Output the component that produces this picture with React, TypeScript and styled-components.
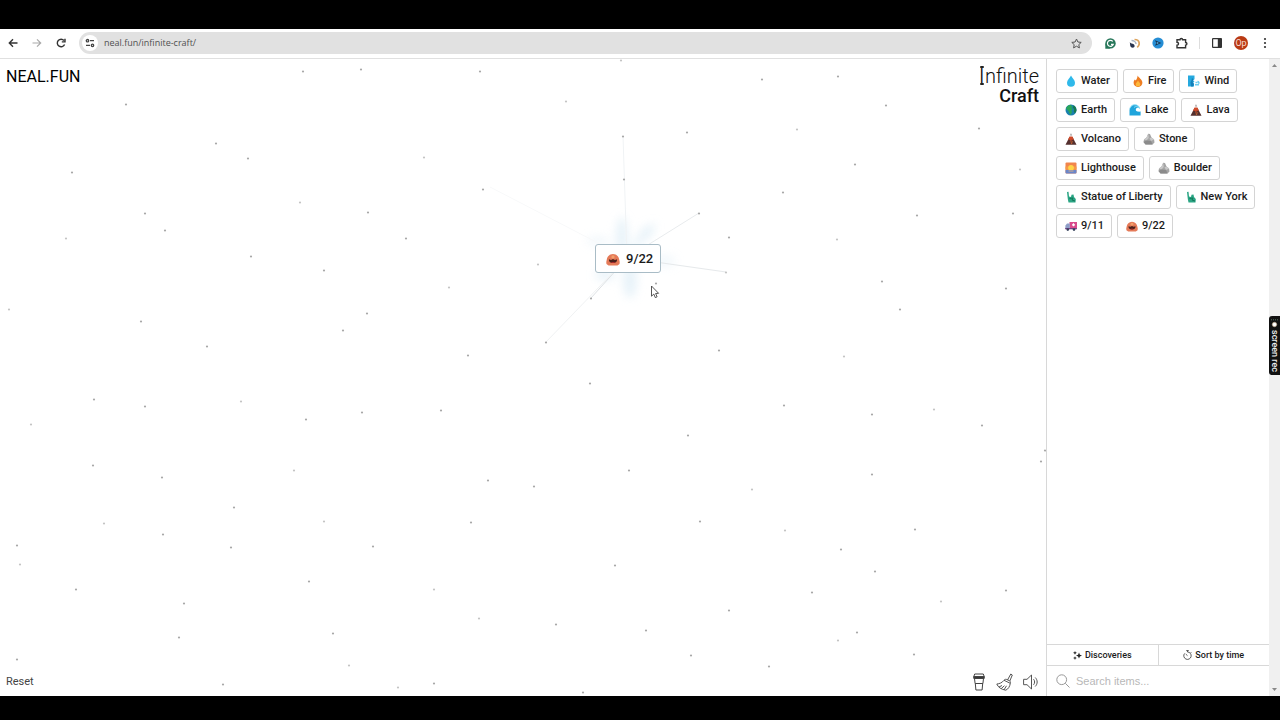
import React from "react";
import styled, { createGlobalStyle } from "styled-components";

const GlobalStyle = createGlobalStyle`
  * { box-sizing: border-box; }
  body { margin: 0; background: #000; font-family: Roboto, "Liberation Sans", sans-serif; color: #1b1b1b; }
  button { font-family: inherit; color: inherit; margin: 0; padding: 0; border: 0; background: none; cursor: pointer; }
  svg { display: block; flex: none; }
`;

const Screen = styled.div`
  height: 100vh;
  padding: 29px 0 24px;
  display: flex;
  flex-direction: column;
  background: #000;
`;

const Toolbar = styled.header`
  flex: none;
  height: 30px;
  display: flex;
  align-items: center;
  background: #fff;
  border-bottom: 1px solid #e0e0e0;
  padding: 0 3px 1px 7px;
`;

const ToolButton = styled.button<{ $width?: number }>`
  width: ${(p) => p.$width ?? 24}px;
  height: 22px;
  flex: none;
  display: flex;
  align-items: center;
  justify-content: center;
`;

const Omnibox = styled.div`
  flex: 1;
  min-width: 0;
  height: 22px;
  margin: 0 6px 0 12px;
  padding: 0 4px 0 3px;
  display: flex;
  align-items: center;
  gap: 6px;
  border-radius: 11px;
  background: #e1e1e1;
`;

const SiteInfo = styled.button`
  width: 16px;
  height: 16px;
  border-radius: 50%;
  background: #fff;
  display: flex;
  align-items: center;
  justify-content: center;
`;

const Address = styled.input`
  flex: 1;
  min-width: 0;
  border: 0;
  outline: 0;
  padding: 0;
  background: none;
  font: 9px/16px "Open Sans", sans-serif;
  color: #505050;
`;

const Divider = styled.span`
  width: 1px;
  height: 12px;
  margin: 0 5px;
  background: #ddd;
`;

const Avatar = styled.span`
  width: 14px;
  height: 14px;
  border-radius: 50%;
  background: #b93a14;
  color: #f8ddd2;
  font-size: 9px;
  line-height: 14px;
  text-align: center;
`;

const Page = styled.div`
  flex: 1;
  min-height: 0;
  display: flex;
  background: #fff;
`;

const Workspace = styled.main`
  flex: 1;
  min-width: 0;
  position: relative;
  overflow: hidden;
  display: flex;
  flex-direction: column;
  justify-content: space-between;
`;

const Sky = styled.svg`
  position: absolute;
  left: 0;
  top: 0;
`;

const WorkspaceRow = styled.div`
  position: relative;
  display: flex;
  justify-content: space-between;
  padding: 6px 7px 3px 6px;
`;

const SiteLogo = styled.a`
  font: 16px/24px Roboto, sans-serif;
  color: #000;
  text-decoration: none;
`;

const GameLogo = styled.h1`
  margin: 0;
  text-align: right;
  color: #111;
  font-size: 18px;
  line-height: 22px;
  font-weight: 500;
`;

const LogoTop = styled.span`
  display: flex;
  justify-content: flex-end;
  height: 20px;
  font-size: 20px;
  line-height: 22px;
  font-weight: 300;
`;

const LogoInitial = styled.span`
  position: relative;
  font-size: 24px;
  line-height: 22px;
  &::before,
  &::after {
    content: "";
    position: absolute;
    left: 1px;
    width: 4px;
    height: 2px;
    border-radius: 1px;
    background: #222;
  }
  &::before { top: 1px; }
  &::after { bottom: 0; }
`;

const ResetButton = styled.button`
  font-size: 11px;
  line-height: 22px;
  color: #444;
`;

const Tools = styled.div`
  display: flex;
  gap: 10px;
  align-items: center;
`;

const ItemButton = styled.button<{ $active?: boolean }>`
  height: ${(p) => (p.$active ? 29 : 24)}px;
  display: flex;
  align-items: center;
  gap: ${(p) => (p.$active ? 6 : 4)}px;
  padding: ${(p) => (p.$active ? "0 7px 0 10px" : "0 7px 0 8px")};
  border: 1px solid ${(p) => (p.$active ? "#a9bcc6" : "#d4d4d4")};
  border-radius: 3px;
  background: #fff;
  font-size: ${(p) => (p.$active ? 13 : 11)}px;
  line-height: 16px;
  font-weight: 500;
  white-space: nowrap;
`;

const Placed = styled.div`
  position: absolute;
  left: 595px;
  top: 185px;
`;

const Cursor = styled.svg`
  position: absolute;
  left: 650px;
  top: 226px;
`;

const Sidebar = styled.aside`
  flex: none;
  width: 223px;
  border-left: 1px solid #d8d8d8;
  display: flex;
  flex-direction: column;
`;

const ItemList = styled.div`
  flex: 1;
  min-height: 0;
  display: flex;
  flex-wrap: wrap;
  align-content: flex-start;
  gap: 5px;
  padding: 10px 9px;
`;

const SortRow = styled.div`
  display: flex;
  border-top: 1px solid #d8d8d8;
  border-bottom: 1px solid #d8d8d8;
`;

const SortButton = styled.button`
  flex: 1;
  height: 20px;
  display: flex;
  align-items: center;
  justify-content: center;
  gap: 3px;
  font-size: 9px;
  font-weight: 500;
  & + & { border-left: 1px solid #d8d8d8; }
`;

const SearchRow = styled.label`
  height: 30px;
  display: flex;
  align-items: center;
  gap: 6px;
  padding: 0 9px;
`;

const SearchInput = styled.input`
  flex: 1;
  min-width: 0;
  border: 0;
  outline: 0;
  padding: 0;
  background: none;
  font: 11px/16px "Liberation Sans", sans-serif;
  &::placeholder { color: #b8b8b8; opacity: 1; }
`;

const Scrollbar = styled.div`
  flex: none;
  width: 11px;
  position: relative;
  display: flex;
  flex-direction: column;
  justify-content: space-between;
  align-items: center;
  padding: 4px 0;
  background: #f0f0f0;
`;

const Recorder = styled.div`
  position: absolute;
  right: 0;
  top: 257px;
  width: 11px;
  height: 59px;
  padding-top: 3px;
  display: flex;
  flex-direction: column;
  align-items: center;
  gap: 2px;
  border-radius: 3px 0 0 3px;
  background: #111;
  color: #eee;
  font-size: 9px;
  line-height: 11px;
  font-weight: 500;
`;

const RecorderText = styled.span`
  writing-mode: vertical-rl;
`;

type IconName = "water" | "fire" | "wind" | "earth" | "wave" | "volcano" | "rock" | "sunrise" | "liberty" | "ambulance" | "monster";

const drawings: Record<IconName, React.ReactNode> = {
  water: <path d="M6 0.5C5 2.8 2 5 2 7.8a4 4 0 0 0 8 0C10 5 7 2.8 6 .5Z" fill="#2fb9ea" />,
  fire: (
    <>
      <path d="M5.500.5c1 2 4.900 4 4.900 7.200A4.200 4.200 0 0 1 6 12a4.200 4.200 0 0 1-4.400-4.200c0-1.600.7-2.700 1.300-3.400l.8 1.100C4.500 4.400 5.700 2.600 5.500.5Z" fill="#ee7d22" />
      <path d="M6 5.500c.5 1.300 2.300 2.200 2.300 4A2.200 2.200 0 0 1 6 11.500a2.200 2.200 0 0 1-2.300-2.200C3.700 7.800 5.400 7 6 5.500Z" fill="#fdb83c" />
    </>
  ),
  wind: (
    <>
      <path d="M0 .5h6.500v3.700L5 5.300l1.500 1.400-1.500 1 1 1.300v2.500H0Z" fill="#25a9df" />
      <path d="M4 2.800l1.500 2L4.500 7l1.500 2-1 2.500H3L2.500 7l1-1.500Z" fill="#147fb9" />
      <path d="M7.500 7.500h2M7 9.800h4M9.500 6.500a1.300 1.300 0 0 1 1 2.200" fill="none" stroke="#6bcdf0" strokeWidth="1.600" />
    </>
  ),
  earth: (
    <>
      <circle cx="6" cy="6" r="5.500" fill="#1980ae" />
      <path d="M1 4.500C2 2 4 .8 5.500.8l2 1.700L6.500 4 8 5 6.500 6.500 7 8.500 5.200 11 3.800 7.500Z" fill="#2aa65a" />
      <path d="M8.500 1.200c2 1 3.200 3 3 5.500L10 9.500 8.700 7.500l.5-2.200L7.800 3.500Z" fill="#17784f" />
    </>
  ),
  wave: (
    <>
      <path d="M.5 11.500V6A5.300 5.300 0 0 1 6 .8c2.600 0 4.300 1.500 4.500 3.600-1.300-1-3-.8-3.600.5-.7 1.700.8 3 4.700 2.700v3.900Z" fill="#20a5dc" />
      <path d="M.8 4.500C2 1.500 4 .6 6 .8c2.600 0 4.300 1.500 4.500 3.600-1.500-2-4-2.400-5.400-1" fill="none" stroke="#8adcf5" strokeWidth="1" />
    </>
  ),
  volcano: (
    <>
      <path d="M4.500 4h3L11.500 11.700H.5Z" fill="#54302f" />
      <path d="M4.500 3.500h3l1.300 3.200-1 .6-.8-1-1 2.400-1.100-2.200-.9.8-.9-.9Z" fill="#cf4a2a" />
      <path d="M4.800 2.500 5.500.5l1.100.3.6 2Z" fill="#b5b0b0" />
      <path d="M5.800 8 6.500 11l1-3" fill="none" stroke="#d9692f" strokeWidth=".6" />
    </>
  ),
  rock: (
    <>
      <path d="M5.200.8 7 1l1.500 3.500 2.600 2 .4 3L9.500 11.500H2.500L.5 9 1 6.500l2.500-2Z" fill="#a5a5a5" />
      <path d="M5.200.8 5.800 5 3.500 7.500 1 6.500l2.500-2ZM6.500 5.200l2-.7 2.600 2L8 8Z" fill="#c8c8c8" />
      <path d="M3.500 7.500 8 8l1.500 3.500h-7L.5 9Z" fill="#8b8b8b" />
    </>
  ),
  sunrise: (
    <>
      <rect x=".5" y=".5" width="11" height="11" rx="1" fill="#f1854d" />
      <path d="M.5 4.500h11V7.500H.5Z" fill="#f59a48" />
      <circle cx="6" cy="5.800" r="2.900" fill="#ffd548" />
      <path d="M.5 8h11v2.500a1 1 0 0 1-1 1h-9a1 1 0 0 1-1-1Z" fill="#6a86c9" />
      <path d="M3.500 9h5" stroke="#f0b678" strokeWidth=".8" />
    </>
  ),
  liberty: (
    <>
      <path d="M2 1l1.500-.3.5 4.800L6 6l.5-2.300 2-.2L9 6l1.800 2-.3 3.500h-7L2.800 8Z" fill="#2aa584" />
      <path d="M4.500 7.500 8 7l-1 2 3 1" fill="none" stroke="#147759" strokeWidth="1" />
    </>
  ),
  ambulance: (
    <>
      <path d="M4.500 2H12v7H4.500Z" fill="#d94a8c" />
      <path d="M.5 5.500 2 3.500h2.800V9H.2Z" fill="#8e9dc7" />
      <path d="M7 4.800h3M8.500 3.300v3" stroke="#fff" strokeWidth="1.200" />
      <path d="M.2 8h11.600v1.300H.2Z" fill="#754286" />
      <circle cx="2.800" cy="9.600" r="1.300" fill="#38435c" />
      <circle cx="9" cy="9.600" r="1.300" fill="#38435c" />
    </>
  ),
  monster: (
    <>
      <path d="M.4 10.300C.1 9.200.2 8 .6 6.800 1 4 3 1.800 6 1.800s5 2.200 5.400 5c.4 1.200.5 2.400.2 3.500l-1.800 1.200H2.200Z" fill="#e57a58" />
      <path d="M2.500 6.200 4.300 6.800l1.700-.7 1.700.7 1.800-.6c.2 2.200-1.500 3.300-3.500 3.300S2.300 8.400 2.500 6.200Z" fill="#4b211c" />
      <circle cx="6" cy="4.200" r="1.400" fill="#f3a06c" />
      <path d="M4.800 9h2.500" stroke="#b3282d" strokeWidth=".8" />
    </>
  ),
};

function ItemIcon({ name, size = 12 }: { name: IconName; size?: number }) {
  return (
    <svg width={size} height={size} viewBox="0 0 12 12" aria-hidden="true">
      {drawings[name]}
    </svg>
  );
}

const items: [IconName, string][] = [
  ["water", "Water"], ["fire", "Fire"], ["wind", "Wind"], ["earth", "Earth"],
  ["wave", "Lake"], ["volcano", "Lava"], ["volcano", "Volcano"], ["rock", "Stone"],
  ["sunrise", "Lighthouse"], ["rock", "Boulder"], ["liberty", "Statue of Liberty"],
  ["liberty", "New York"], ["ambulance", "9/11"], ["monster", "9/22"],
];

/* Particle positions, relative to the workspace. */
const dots: [number, number][] = [
  [303, 12], [361, 10], [480, 12], [621, 1], [762, 20], [838, 17], [886, 46], [566, 42], [126, 45],
  [216, 84], [248, 99], [424, 98], [72, 113], [483, 130], [687, 73], [797, 70], [979, 69], [855, 105],
  [783, 133], [1020, 110], [1013, 154], [917, 156], [729, 178], [300, 143], [368, 153], [145, 154], [165, 171],
  [66, 179], [251, 197], [324, 211], [406, 179], [538, 205], [623, 77], [624, 120], [699, 154], [726, 213],
  [656, 224], [591, 239], [546, 283], [837, 180], [882, 222], [900, 250], [1006, 229], [449, 228],
  [367, 254], [343, 271], [141, 262], [9, 250], [207, 287], [468, 296], [719, 291], [844, 297],
  [590, 324], [784, 346], [872, 355], [934, 350], [982, 366], [94, 340], [145, 347], [241, 342],
  [306, 360], [362, 353], [441, 351], [31, 365], [688, 376], [93, 406], [162, 418], [294, 411],
  [488, 421], [534, 427], [629, 411], [752, 430], [872, 415], [1041, 402], [1045, 391], [104, 464], [163, 475],
  [234, 448], [231, 488], [324, 462], [373, 487], [471, 463], [700, 462], [785, 471], [841, 490],
  [915, 470], [17, 486], [20, 505], [76, 530], [184, 544], [309, 522], [434, 530], [615, 506],
  [812, 533], [875, 512], [941, 542], [1006, 531], [179, 578], [333, 574], [479, 559], [556, 565],
  [646, 571], [729, 551], [838, 581], [857, 573], [914, 595], [17, 600], [349, 606], [691, 596], [769, 607],
  [223, 625], [398, 628], [434, 624], [583, 633],
];

const rays: [number, number, string][] = [
  [623, 77, "#f0f3f5"], [490, 128, "#f8f9fa"], [699, 154, "#e8ebed"],
  [726, 213, "#e6e9eb"], [591, 239, "#dde1e4"], [546, 283, "#f0f2f3"],
];

export default function App() {
  return (
    <Screen>
      <GlobalStyle />
      <Toolbar>
        <ToolButton aria-label="Back" $width={12}>
          <svg width="10" height="10" viewBox="0 0 10 10" fill="none" stroke="#333" strokeWidth="1.400"><path d="M9.500 5H1.500M5 1.300 1.300 5 5 8.700" /></svg>
        </ToolButton>
        <ToolButton aria-label="Forward" $width={36}>
          <svg width="10" height="10" viewBox="0 0 10 10" fill="none" stroke="#aaa" strokeWidth="1.200"><path d="M.5 5h8M5 1.300 8.700 5 5 8.700" /></svg>
        </ToolButton>
        <ToolButton aria-label="Reload" $width={12}>
          <svg width="10" height="10" viewBox="0 0 10 10" fill="none" stroke="#333" strokeWidth="1.400"><path d="M8.600 6.500A3.800 3.800 0 1 1 8 2.500M9 .7v3.200H5.800" /></svg>
        </ToolButton>
        <Omnibox>
          <SiteInfo aria-label="View site information">
            <svg width="10" height="10" viewBox="0 0 10 10" fill="none" stroke="#444" strokeWidth="1.300"><circle cx="2.500" cy="2.700" r="1.200" /><path d="M5 2.700h4M1 7.300h4" /><circle cx="7.500" cy="7.300" r="1.200" /></svg>
          </SiteInfo>
          <Address aria-label="Address" defaultValue="neal.fun/infinite-craft/" />
          <ToolButton aria-label="Bookmark this page">
            <svg width="11" height="11" viewBox="0 0 11 11" fill="none" stroke="#555" strokeWidth="1"><path d="m5.500 1 1.400 3 3.300.4-2.400 2.200.6 3.300-2.900-1.700-2.900 1.700.6-3.300L.8 4.400 4.100 4Z" /></svg>
          </ToolButton>
        </Omnibox>
        <ToolButton aria-label="Grammar checker">
          <svg width="11" height="11" viewBox="0 0 11 11"><path d="M.3 5.400v5.300h5" fill="#27775a" /><circle cx="5.500" cy="5.400" r="5.200" fill="#27775a" /><path d="M7.800 3.500A3 3 0 1 0 8.300 6.300H6" fill="none" stroke="#fff" strokeWidth="1.200" /></svg>
        </ToolButton>
        <ToolButton aria-label="Traffic extension">
          <svg width="11" height="11" viewBox="0 0 11 11" fill="none"><path d="M.8 4C1.800 6.300 5.600 5 5.600 8c0 2.300-4 2.300-4.400-.6Z" fill="#27334f" /><path d="M5.500 1.500c3 0 4.700 2 4.700 4.300 0 1.500-1 2.700-2 3.500" stroke="#dda45f" strokeWidth="1.700" /><path d="M2.500 2.500c2.500 0 4.500 1.500 4.500 3.500" stroke="#aab5c4" strokeWidth="1.500" /></svg>
        </ToolButton>
        <ToolButton aria-label="Video extension">
          <svg width="12" height="12" viewBox="0 0 12 12"><circle cx="6" cy="6" r="5.600" fill="#258dd4" /><path d="M3 3.200 9.300 6 3 8.800 4.300 6Z" fill="#15324f" /><path d="M4.800 5 7 6 4.800 7Z" fill="#69c3f1" /></svg>
        </ToolButton>
        <ToolButton aria-label="Extensions">
          <svg width="12" height="12" viewBox="0 0 12 12" fill="none" stroke="#333" strokeWidth="1.400"><path d="M1 2.800h3a1.300 1.300 0 0 1 2.600 0h3v2.700a1.300 1.300 0 0 1 0 2.600v2.700H1V8.300a1.500 1.500 0 0 0 0-3Z" /></svg>
        </ToolButton>
        <Divider />
        <ToolButton aria-label="Side panel">
          <svg width="10" height="10" viewBox="0 0 10 10"><rect x=".6" y=".6" width="8.800" height="8.800" rx=".5" fill="none" stroke="#333" strokeWidth="1.200" /><path d="M5.800.5h3.700v9H5.800Z" fill="#333" /></svg>
        </ToolButton>
        <ToolButton aria-label="Profile"><Avatar>Op</Avatar></ToolButton>
        <ToolButton aria-label="Menu">
          <svg width="4" height="12" viewBox="0 0 4 12" fill="#333"><circle cx="2" cy="2" r="1.100" /><circle cx="2" cy="6" r="1.100" /><circle cx="2" cy="10" r="1.100" /></svg>
        </ToolButton>
      </Toolbar>

      <Page>
        <Workspace>
          <Sky width="1047" height="637" viewBox="0 0 1047 637" aria-hidden="true">
            <defs><filter id="glow" x="-50%" y="-50%" width="200%" height="200%"><feGaussianBlur stdDeviation="5" /></filter></defs>
            <g filter="url(#glow)" fill="#d8eaf5" opacity=".6">
              <ellipse cx="622" cy="178" rx="6" ry="20" />
              <ellipse cx="630" cy="221" rx="7" ry="18" />
              <path d="m630 190 14-22 12-4-4 12-18 14Z" />
              <ellipse cx="605" cy="216" rx="10" ry="5" />
              <ellipse cx="598" cy="182" rx="12" ry="5" opacity=".5" />
              <ellipse cx="664" cy="202" rx="12" ry="6" opacity=".5" />
            </g>
            {rays.map(([x, y, color], i) => <line key={i} x1="627" y1="199" x2={x} y2={y} stroke={color} />)}
            {dots.map(([x, y], i) => <circle key={i} cx={x} cy={y + 0.5} r="1.100" fill={i % 4 === 3 ? "#c4c4c4" : "#a8a8a8"} />)}
          </Sky>
          <WorkspaceRow>
            <SiteLogo href="#">NEAL.FUN</SiteLogo>
            <GameLogo><LogoTop><LogoInitial>I</LogoInitial>nfinite</LogoTop>Craft</GameLogo>
          </WorkspaceRow>
          <Placed>
            <ItemButton $active><ItemIcon name="monster" size={14} />9/22</ItemButton>
          </Placed>
          <WorkspaceRow>
            <ResetButton>Reset</ResetButton>
            <Tools>
              <ToolButton aria-label="Buy a coffee" $width={16}>
                <svg width="14" height="18" viewBox="0 0 14 18" fill="none" stroke="#444" strokeWidth="1"><path d="M2.700 1h8.600l.9 2.500H1.800ZM1.800 3.500h10.400v2H1.800ZM2.500 5.500l.6 5h7.800l.6-5M3.300 10.500l.6 6.500h6.200l.6-6.500" /><path d="M2 3.500h10v1.700H2Z" fill="#333" /></svg>
              </ToolButton>
              <ToolButton aria-label="Clear the board" $width={16}>
                <svg width="18" height="18" viewBox="0 0 18 18" fill="none" stroke="#555" strokeWidth="1" strokeLinejoin="round"><path d="m11.500 7 3.300-6 1.500 1-2.500 6M8 7.300l6.300 3M8 7.300c1-1.200 2-1.200 3-.7l2.500 1.200c1 .6 1.300 1.600.8 2.500M8 7.300C6 9.800 3.500 10.800.8 11c1.200 3.300 4.400 5.400 9 6.200 2.500-1.200 4-3.700 4.500-6.900M3 14l3-1.500M5.200 15.700l3.200-3M8 16.800l2.500-4" /></svg>
              </ToolButton>
              <ToolButton aria-label="Toggle sound" $width={16}>
                <svg width="17" height="16" viewBox="0 0 17 16" fill="none" stroke="#555" strokeWidth="1" strokeLinejoin="round" strokeLinecap="round"><path d="M1 5.300h3L8.500 1v14L4 10.700H1ZM10.800 5.500c1.200 1.400 1.200 3.600 0 5M12.500 3.800c2.300 2.300 2.300 6.100 0 8.400" /></svg>
              </ToolButton>
            </Tools>
          </WorkspaceRow>
          <Cursor width="10" height="14" viewBox="0 0 10 14" aria-hidden="true"><path d="M1.500 1v10.200l2.300-2.100 1.500 3.500 1.800-.8-1.500-3.300 3-.2Z" fill="#fff" stroke="#444" strokeWidth=".9" /></Cursor>
        </Workspace>

        <Sidebar>
          <ItemList>
            {items.map(([icon, name]) => <ItemButton key={name}><ItemIcon name={icon} />{name}</ItemButton>)}
          </ItemList>
          <SortRow>
            <SortButton>
              <svg width="9" height="9" viewBox="0 0 9 9" fill="#222"><path d="m6 1.500.9 2.200 2.100.8-2.100.9L6 7.600l-.9-2.200-2.100-.9 2.100-.8ZM2 0l.6 1.300 1.300.5-1.300.6L2 3.800l-.6-1.400L0 1.800l1.400-.5ZM2 5.200l.6 1.300 1.300.5-1.300.6L2 9l-.6-1.400L0 7l1.400-.5Z" /></svg>
              Discoveries
            </SortButton>
            <SortButton>
              <svg width="9" height="10" viewBox="0 0 9 10" fill="none" stroke="#333" strokeWidth=".8"><path d="M4.500 2a3.700 3.700 0 1 1-3 1.500M3.200.6h2.600M4.500.6V2M4.500 5.700 2.700 4M7.500 2l.8.8" /></svg>
              Sort by time
            </SortButton>
          </SortRow>
          <SearchRow>
            <svg width="14" height="14" viewBox="0 0 14 14" fill="none" stroke="#999" strokeWidth="1"><circle cx="5.700" cy="5.700" r="4.900" /><path d="m9.300 9.300 4.200 4.200" /></svg>
            <SearchInput type="text" aria-label="Search items" placeholder="Search items..." />
          </SearchRow>
        </Sidebar>

        <Scrollbar>
          <svg width="5" height="4" viewBox="0 0 5 4"><path d="M0 4h5L2.500 1Z" fill="#888" /></svg>
          <svg width="5" height="4" viewBox="0 0 5 4"><path d="M0 0h5L2.500 3Z" fill="#888" /></svg>
          <Recorder>
            <svg width="9" height="9" viewBox="0 0 9 9"><path d="M1 .8h7" stroke="#557060" strokeWidth="1" strokeDasharray="1 1" /><circle cx="4.500" cy="5.500" r="2.200" fill="#fff" stroke="#b9a184" strokeWidth=".7" /></svg>
            <RecorderText>screen rec</RecorderText>
          </Recorder>
        </Scrollbar>
      </Page>
    </Screen>
  );
}
